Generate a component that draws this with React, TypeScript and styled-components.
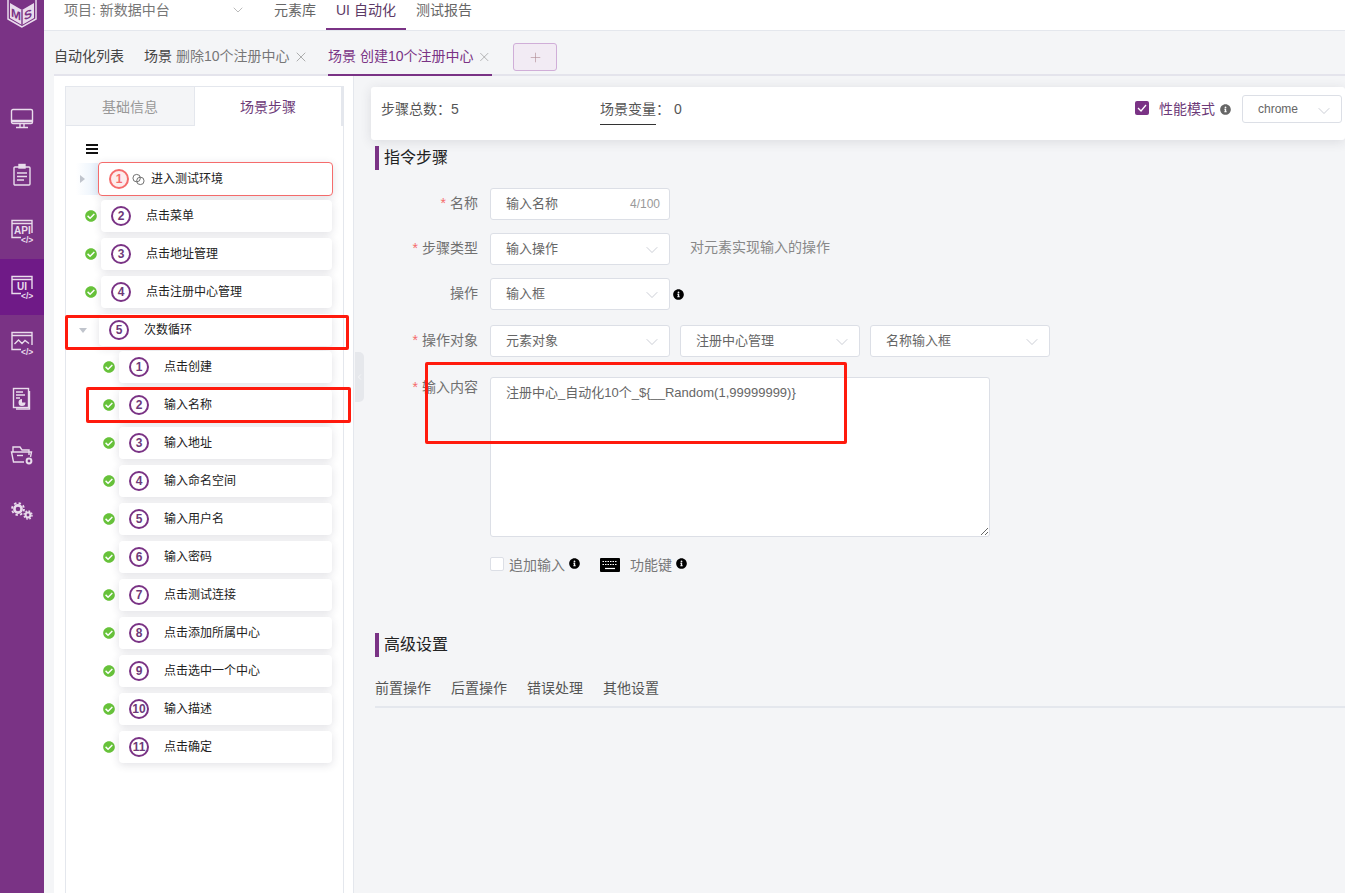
import styled, { createGlobalStyle } from 'styled-components';
import { ChevronDown, ChevronLeft, Plus, X } from 'lucide-react';
import { FaCheckCircle, FaInfoCircle } from 'react-icons/fa';

const PURPLE = '#7a3385';
const FONT = '"Liberation Sans", "Noto Sans CJK SC", sans-serif';

const GlobalStyle = createGlobalStyle`
  html, body {
    margin: 0;
    height: 100%;
    overflow: hidden;
    background: #f4f5f7;
    font-family: ${FONT};
  }
  * { box-sizing: border-box; }
`;

const Page = styled.div`
  position: relative;
  display: flex;
  width: 1345px;
  height: 893px;
  overflow: hidden;
`;

const Sidebar = styled.nav`
  flex: 0 0 44px;
  background: ${PURPLE};
  display: flex;
  flex-direction: column;
`;

const LogoBox = styled.div`
  height: 91px;
  display: flex;
  justify-content: center;
  align-items: flex-start;
  overflow: hidden;
`;

const NavItem = styled.div<{ $active?: boolean }>`
  height: 56px;
  display: flex;
  align-items: center;
  justify-content: center;
  background: ${(p) => (p.$active ? '#6f1a87' : 'transparent')};
`;

const Main = styled.div`
  flex: 1;
  min-width: 0;
  display: flex;
  flex-direction: column;
`;

const Header = styled.header`
  height: 31px;
  background: #fff;
  border-bottom: 1px solid #e4e7ed;
  display: flex;
  align-items: flex-start;
  padding-left: 20px;
  font-size: 14px;
  color: #666;
`;

const Project = styled.div`
  width: 200px;
  height: 20px;
  line-height: 20px;
  display: flex;
  justify-content: space-between;
  padding-right: 18px;
  align-items: center;
  color: #777;
`;

const HeaderNav = styled.div<{ $active?: boolean }>`
  height: 30px;
  line-height: 20px;
  padding: 0 10px;
  color: ${(p) => (p.$active ? '#5c3a66' : '#666')};
  border-bottom: 2px solid ${(p) => (p.$active ? PURPLE : 'transparent')};
`;

const TabBar = styled.div`
  height: 45px;
  margin-left: 10px;
  border-bottom: 2px solid #e4e4ec;
  display: flex;
  align-items: flex-end;
  font-size: 14px;
`;

const PageTab = styled.div<{ $active?: boolean; $width: number }>`
  width: ${(p) => p.$width}px;
  height: 45px;
  margin-bottom: -2px;
  padding-top: 16px;
  line-height: 18px;
  display: flex;
  gap: 4px;
  white-space: nowrap;
  color: ${(p) => (p.$active ? PURPLE : '#444')};
  border-bottom: 2px solid ${(p) => (p.$active ? PURPLE : 'transparent')};
  svg { margin-top: 2px; color: #888; }
`;

const TabMuted = styled.span<{ $active?: boolean }>`
  color: ${(p) => (p.$active ? PURPLE : '#777')};
`;

const AddTab = styled.button`
  width: 44px;
  height: 28px;
  margin: 0 0 3px 21px;
  padding: 0;
  display: flex;
  align-items: center;
  justify-content: center;
  background: #f2ebf4;
  border: 1px solid #d0aed8;
  border-radius: 3px;
  color: #b08a94;
`;

const Body = styled.div`
  flex: 1;
  min-height: 0;
  display: flex;
`;

const LeftPanel = styled.aside`
  flex: 0 0 300px;
  margin-left: 10px;
  padding: 10px 9px 0 11px;
  background: #fff;
  border-right: 1px solid #e4e7ed;
`;

const StepsBox = styled.div`
  height: 100%;
  border: 1px solid #e4e7ed;
  border-bottom: 0;
`;

const BoxTabs = styled.div`
  display: flex;
  height: 39px;
`;

const BoxTab = styled.div<{ $active?: boolean }>`
  flex: ${(p) => (p.$active ? '1' : '0 0 129px')};
  line-height: 40px;
  text-align: center;
  font-size: 14px;
  background: ${(p) => (p.$active ? '#fff' : '#f4f5f7')};
  color: ${(p) => (p.$active ? '#6d3a78' : '#999')};
  border-bottom: ${(p) => (p.$active ? '0' : '1px solid #e4e7ed')};
  border-right: ${(p) => (p.$active ? '2px solid #e4e7ed' : '1px solid #e4e7ed')};
`;

const Tree = styled.div`
  padding: 18px 11px 0 10px;
`;

const Burger = styled.div`
  width: 12px;
  height: 10px;
  margin: 0 0 8px 10px;
  border-top: 2px solid #111;
  border-bottom: 2px solid #111;
  position: relative;
  &::after {
    content: '';
    position: absolute;
    left: 0;
    right: 0;
    top: 2px;
    height: 2px;
    background: #111;
  }
`;

const Row = styled.div<{ $mb?: number }>`
  display: flex;
  align-items: center;
  margin-bottom: ${(p) => p.$mb ?? 6}px;
`;

const Gutter = styled.div<{ $width: number; $pad: number; $tint?: boolean }>`
  flex: 0 0 ${(p) => p.$width}px;
  height: 32px;
  display: flex;
  align-items: center;
  padding-left: ${(p) => p.$pad}px;
  background: ${(p) => (p.$tint ? 'linear-gradient(90deg, #fff, #e8f1fb)' : 'transparent')};
`;

const Caret = styled.div<{ $open?: boolean }>`
  width: 0;
  height: 0;
  ${(p) =>
    p.$open
      ? `border-left: 4px solid transparent; border-right: 4px solid transparent; border-top: 5px solid #c0c4cc;`
      : `border-top: 4px solid transparent; border-bottom: 4px solid transparent; border-left: 5px solid #c0c4cc;`}
`;

const StepCard = styled.div<{ $error?: boolean }>`
  flex: ${(p) => (p.$error ? '0 0 235px' : '1')};
  height: ${(p) => (p.$error ? '34px' : '32px')};
  margin-right: ${(p) => (p.$error ? '-1px' : '0')};
  display: flex;
  align-items: center;
  padding-left: 10px;
  background: #fff;
  border-radius: 4px;
  font-size: 12px;
  color: #222;
  border: ${(p) => (p.$error ? '1px solid #f56c6c' : '0')};
  box-shadow: 0 2px 8px rgba(40, 40, 70, 0.14);
`;

const StepNum = styled.div<{ $error?: boolean }>`
  width: 20px;
  height: 20px;
  flex: none;
  border-radius: 50%;
  display: flex;
  align-items: center;
  justify-content: center;
  font-size: 12px;
  font-weight: 700;
  background: ${(p) => (p.$error ? '#fdecec' : '#fff')};
  color: ${(p) => (p.$error ? '#f56c6c' : '#6d3a78')};
  border: 2px solid ${(p) => (p.$error ? '#f56c6c' : PURPLE)};
  margin-right: ${(p) => (p.$error ? '3px' : '15px')};
`;

const StepName = styled.span`
  margin-top: -3px;
`;

const LoopIcon = styled.svg`
  width: 13px;
  height: 13px;
  margin-right: 6px;
  flex: none;
`;

const Collapse = styled.div`
  position: absolute;
  left: 355px;
  top: 352px;
  width: 9px;
  height: 50px;
  background: #e6e8ec;
  border-radius: 0 5px 5px 0;
  display: flex;
  align-items: center;
  justify-content: center;
  color: #fff;
`;

const Content = styled.div`
  flex: 1;
  min-width: 0;
  padding: 11px 0 0 17px;
`;

const Summary = styled.div`
  height: 53px;
  background: #fff;
  border-radius: 3px;
  padding: 0 3px 0 10px;
  display: flex;
  align-items: flex-start;
  font-size: 14px;
  color: #555;
  box-shadow: 0 2px 12px rgba(40, 40, 60, 0.12);
`;

const SummaryItem = styled.div`
  width: 219px;
  line-height: 18px;
  margin-top: 13px;
`;

const VarLabel = styled.span`
  display: inline-block;
  height: 25px;
  border-bottom: 1px solid #333;
`;

const Spacer = styled.div`
  flex: 1;
`;

const Tick = styled.div`
  width: 14px;
  height: 14px;
  margin: 14px 10px 0 0;
  border-radius: 2px;
  background: ${PURPLE};
  display: flex;
  align-items: center;
  justify-content: center;
`;

const PerfLabel = styled.div`
  margin-top: 13px;
  line-height: 18px;
  color: #6d3a78;
  display: flex;
  align-items: center;
  gap: 5px;
  margin-right: 11px;
  svg { color: #666; }
`;

const Heading = styled.h3<{ $mt: number }>`
  margin: ${(p) => p.$mt}px 0 0 4px;
  height: 24px;
  line-height: 23px;
  padding-left: 5px;
  border-left: 4px solid ${PURPLE};
  font-size: 16px;
  font-weight: 400;
  color: #222;
`;

const Form = styled.div`
  margin: 18px 0 0 4px;
`;

const FormRow = styled.div<{ $mb: number }>`
  display: flex;
  align-items: flex-start;
  gap: 10px;
  margin-bottom: ${(p) => p.$mb}px;
`;

const Label = styled.div`
  flex: 0 0 103px;
  margin-right: 2px;
  line-height: 31px;
  text-align: right;
  font-size: 14px;
  color: #707070;
`;

const AreaLabel = styled(Label)`
  line-height: 20px;
`;

const Star = styled.span`
  color: #f56c6c;
  margin-right: 4px;
`;

const Field = styled.div<{ $width?: number }>`
  flex: 0 0 ${(p) => p.$width ?? 180}px;
  height: 32px;
  display: flex;
  align-items: center;
  justify-content: space-between;
  padding: 0 7px 3px 15px;
  background: #fff;
  border: 1px solid #dcdfe6;
  border-radius: 3px;
  font-size: 13px;
  color: #666;
  svg { color: #c0c4cc; margin-top: 5px; }
`;

const BrowserField = styled(Field)`
  margin-top: 8px;
  height: 28px;
  padding-bottom: 0;
  font-size: 12px;
  svg { margin-top: 3px; }
`;

const Counter = styled.span`
  font-size: 12px;
  color: #999;
  margin: 3px 2px 0 0;
`;

const Hint = styled.div`
  margin-left: 10px;
  line-height: 29px;
  font-size: 14px;
  color: #888;
`;

const InfoWrap = styled.div`
  height: 32px;
  margin-left: -7px;
  display: flex;
  align-items: center;
  color: #000;
`;

const ContentBox = styled.textarea`
  flex: 0 0 500px;
  height: 160px;
  padding: 6px 15px;
  resize: vertical;
  border: 1px solid #dcdfe6;
  border-radius: 3px;
  outline: 0;
  background: #fff;
  font-family: ${FONT};
  font-size: 13px;
  line-height: 18px;
  color: #666;
`;

const Options = styled.div`
  margin-left: 115px;
  height: 16px;
  display: flex;
  align-items: center;
  font-size: 14px;
  color: #777;
`;

const Box = styled.div`
  width: 14px;
  height: 14px;
  margin-right: 5px;
  background: #fff;
  border: 1px solid #dcdfe6;
  border-radius: 2px;
`;

const Option = styled.div<{ $width: number }>`
  flex: 0 0 ${(p) => p.$width}px;
  display: flex;
  align-items: center;
  gap: 4px;
  svg { color: #000; margin-bottom: 2px; }
`;

const KeyIcon = styled.svg`
  width: 20px;
  height: 14px;
  margin: 2px 10px 0 0;
`;

const AdvTabs = styled.div`
  margin: 20px 0 0 4px;
  height: 31px;
  display: flex;
  gap: 20px;
  border-bottom: 2px solid #e4e7ed;
  font-size: 14px;
  line-height: 22px;
  color: #555;
`;

const RedBox = styled.div<{ $x: number; $y: number; $w: number; $h: number }>`
  position: absolute;
  left: ${(p) => p.$x}px;
  top: ${(p) => p.$y}px;
  width: ${(p) => p.$w}px;
  height: ${(p) => p.$h}px;
  border: 3px solid #ff1a0d;
  border-radius: 2px;
  pointer-events: none;
`;

const ICON = { fill: 'none', stroke: '#e9dcec', strokeWidth: 1.4 };
const codeMark = (x: number, y: number) => (
  <text x={x} y={y} fontSize="8.5" fontWeight="700" fill="#e9dcec" stroke="none" fontFamily="Liberation Sans">
    {'</>'}
  </text>
);

const navIcons = [
  <svg width="24" height="22" viewBox="0 0 24 22" {...ICON}>
    <rect x="1.5" y="1.5" width="21" height="14" rx="1.5" />
    <path d="M1.5 13h21" strokeWidth="2.5" />
    <path d="M10 16v3M14 16v3M6 19.5h12" />
  </svg>,
  <svg width="20" height="24" viewBox="0 0 20 24" {...ICON}>
    <rect x="2" y="4" width="16" height="18" rx="1" />
    <rect x="7" y="1.5" width="6" height="3.5" fill="#e9dcec" />
    <path d="M5 10h10M5 13.5h10M5 17h7" />
  </svg>,
  <svg width="24" height="25" viewBox="0 0 24 25" {...ICON}>
    <path d="M11 18.5H2V1.5h20V14M2 4.5h20" />
    <text x="4" y="14.5" fontSize="10" fontWeight="700" fill="#e9dcec" stroke="none" fontFamily="Liberation Sans">API</text>
    {codeMark(11, 24)}
  </svg>,
  <svg width="24" height="25" viewBox="0 0 24 25" {...ICON}>
    <path d="M11 18.5H2V1.5h20V14M2 4.5h20" />
    <text x="7" y="14.5" fontSize="10" fontWeight="700" fill="#e9dcec" stroke="none" fontFamily="Liberation Sans">UI</text>
    {codeMark(11, 24)}
  </svg>,
  <svg width="24" height="25" viewBox="0 0 24 25" {...ICON}>
    <path d="M11 18.5H2V1.5h20V14M2 4.5h20" />
    <path d="M4.5 13l4-4 3.5 3.5 3-3 4 3" />
    {codeMark(11, 24)}
  </svg>,
  <svg width="20" height="24" viewBox="0 0 20 24" {...ICON}>
    <rect x="1.5" y="1.5" width="15" height="19" />
    <path d="M17.5 4v18H4" />
    <path d="M4 5h7M4 8h9M4 11h4" />
    <path d="M10 12a3.5 3.5 0 1 0 3.5 3.5H10z" fill="#e9dcec" stroke="none" />
  </svg>,
  <svg width="24" height="22" viewBox="0 0 24 22" {...ICON}>
    <path d="M3 8V3h7l2 3h7v5" />
    <path d="M14 18H3.5L1.5 8h20l-1 5" />
    <path d="M7 11.5h6" />
    <circle cx="19" cy="17" r="2.4" strokeWidth="2" />
  </svg>,
  <svg width="24" height="20" viewBox="0 0 24 20" fill="none" stroke="#e9dcec">
    <circle cx="8" cy="8" r="3.6" strokeWidth="2.6" />
    <circle cx="8" cy="8" r="6" strokeWidth="1.8" strokeDasharray="2.4 2.3" />
    <circle cx="18" cy="14" r="2.4" strokeWidth="2" />
    <circle cx="18" cy="14" r="4" strokeWidth="1.4" strokeDasharray="1.7 1.45" />
  </svg>,
];

const topSteps = [
  { n: 2, name: '点击菜单' },
  { n: 3, name: '点击地址管理' },
  { n: 4, name: '点击注册中心管理' },
];

const childSteps = [
  '点击创建',
  '输入名称',
  '输入地址',
  '输入命名空间',
  '输入用户名',
  '输入密码',
  '点击测试连接',
  '点击添加所属中心',
  '点击选中一个中心',
  '输入描述',
  '点击确定',
];

function Select({ value, width }: { value: string; width?: number }) {
  return (
    <Field $width={width}>
      {value}
      <ChevronDown size={20} strokeWidth={1} />
    </Field>
  );
}

export default function App() {
  return (
    <Page>
      <GlobalStyle />
      <Sidebar>
        <LogoBox>
          <svg width="32" height="28" viewBox="0 0 32 28">
            <path d="M16 27L2 19V-1L16 -9L30 -1V19Z" fill="none" stroke="#e9dcec" strokeWidth="1.5" />
            <path d="M4 3L16 10L28 3V18L16 25L4 18Z" fill="#e9dcec" />
            <path d="M16 10V25" stroke={PURPLE} strokeWidth="1.4" />
            <text x="5" y="19" fontSize="12" fontWeight="700" fill={PURPLE} fontFamily="Liberation Sans" transform="skewY(25) translate(0 -5)">M</text>
            <text x="18" y="20" fontSize="12" fontWeight="700" fill={PURPLE} fontFamily="Liberation Sans" transform="skewY(-25) translate(0 9)">S</text>
          </svg>
        </LogoBox>
        {navIcons.map((icon, i) => (
          <NavItem key={i} $active={i === 3}>
            {icon}
          </NavItem>
        ))}
      </Sidebar>

      <Main>
        <Header>
          <Project>
            项目: 新数据中台
            <ChevronDown size={16} strokeWidth={1} color="#999" />
          </Project>
          <HeaderNav>元素库</HeaderNav>
          <HeaderNav $active>UI 自动化</HeaderNav>
          <HeaderNav>测试报告</HeaderNav>
        </Header>

        <TabBar>
          <PageTab $width={90}>自动化列表</PageTab>
          <PageTab $width={184}>
            <span>
              场景 <TabMuted>删除10个注册中心</TabMuted>
            </span>
            <X size={16} strokeWidth={1} />
          </PageTab>
          <PageTab $active $width={164}>
            <span>
              场景 <TabMuted $active>创建10个注册中心</TabMuted>
            </span>
            <X size={16} strokeWidth={1} />
          </PageTab>
          <AddTab aria-label="add">
            <Plus size={15} strokeWidth={1} />
          </AddTab>
        </TabBar>

        <Body>
          <LeftPanel>
            <StepsBox>
              <BoxTabs>
                <BoxTab>基础信息</BoxTab>
                <BoxTab $active>场景步骤</BoxTab>
              </BoxTabs>
              <Tree>
                <Burger />
                <Row $mb={4}>
                  <Gutter $width={22} $pad={4} $tint>
                    <Caret />
                  </Gutter>
                  <StepCard $error>
                    <StepNum $error>1</StepNum>
                    <LoopIcon viewBox="0 0 14 14" fill="none" stroke="#666" strokeWidth="1">
                      <circle cx="5" cy="5.5" r="4" />
                      <circle cx="9" cy="8.5" r="4" />
                    </LoopIcon>
                    <StepName>进入测试环境</StepName>
                  </StepCard>
                </Row>
                {topSteps.map((s) => (
                  <Row key={s.n}>
                    <Gutter $width={25} $pad={9}>
                      <FaCheckCircle size={12} color="#67c23a" />
                    </Gutter>
                    <StepCard>
                      <StepNum>{s.n}</StepNum>
                      <StepName>{s.name}</StepName>
                    </StepCard>
                  </Row>
                ))}
                <Row $mb={5}>
                  <Gutter $width={23} $pad={3}>
                    <Caret $open />
                  </Gutter>
                  <StepCard>
                    <StepNum>5</StepNum>
                    <StepName>次数循环</StepName>
                  </StepCard>
                </Row>
                {childSteps.map((name, i) => (
                  <Row key={name}>
                    <Gutter $width={43} $pad={27}>
                      <FaCheckCircle size={12} color="#67c23a" />
                    </Gutter>
                    <StepCard>
                      <StepNum>{i + 1}</StepNum>
                      <StepName>{name}</StepName>
                    </StepCard>
                  </Row>
                ))}
              </Tree>
            </StepsBox>
          </LeftPanel>

          <Content>
            <Summary>
              <SummaryItem>步骤总数：5</SummaryItem>
              <SummaryItem>
                <VarLabel>场景变量</VarLabel>： 0
              </SummaryItem>
              <Spacer />
              <Tick>
                <svg width="10" height="8" viewBox="0 0 10 8" fill="none" stroke="#fff" strokeWidth="1.3">
                  <path d="M1 4l3 3 5-6" />
                </svg>
              </Tick>
              <PerfLabel>
                性能模式
                <FaInfoCircle size={11} />
              </PerfLabel>
              <BrowserField $width={100}>
                chrome
                <ChevronDown size={20} strokeWidth={1} />
              </BrowserField>
            </Summary>

            <Heading $mt={6}>指令步骤</Heading>
            <Form>
              <FormRow $mb={13}>
                <Label>
                  <Star>*</Star>名称
                </Label>
                <Field>
                  输入名称
                  <Counter>4/100</Counter>
                </Field>
              </FormRow>
              <FormRow $mb={13}>
                <Label>
                  <Star>*</Star>步骤类型
                </Label>
                <Select value="输入操作" />
                <Hint>对元素实现输入的操作</Hint>
              </FormRow>
              <FormRow $mb={15}>
                <Label>操作</Label>
                <Select value="输入框" />
                <InfoWrap>
                  <FaInfoCircle size={11} />
                </InfoWrap>
              </FormRow>
              <FormRow $mb={20}>
                <Label>
                  <Star>*</Star>操作对象
                </Label>
                <Select value="元素对象" />
                <Select value="注册中心管理" />
                <Select value="名称输入框" />
              </FormRow>
              <FormRow $mb={19}>
                <AreaLabel>
                  <Star>*</Star>输入内容
                </AreaLabel>
                <ContentBox readOnly defaultValue={'注册中心_自动化10个_${__Random(1,99999999)}'} />
              </FormRow>
              <Options>
                <Box />
                <Option $width={91}>
                  追加输入
                  <FaInfoCircle size={11} />
                </Option>
                <KeyIcon viewBox="0 0 20 14">
                  <rect width="20" height="14" rx="1" fill="#000" />
                  <path d="M2.5 3.5h15M2.5 6.5h15" stroke="#fff" strokeWidth="1.2" strokeDasharray="1.5 1" />
                  <path d="M5 10.5h10" stroke="#fff" strokeWidth="1.2" />
                </KeyIcon>
                <Option $width={70}>
                  功能键
                  <FaInfoCircle size={11} />
                </Option>
              </Options>
            </Form>

            <Heading $mt={61}>高级设置</Heading>
            <AdvTabs>
              <span>前置操作</span>
              <span>后置操作</span>
              <span>错误处理</span>
              <span>其他设置</span>
            </AdvTabs>
          </Content>
        </Body>
      </Main>

      <Collapse>
        <ChevronLeft size={10} strokeWidth={1.5} />
      </Collapse>
      <RedBox $x={65} $y={315} $w={284} $h={35} />
      <RedBox $x={86} $y={387} $w={265} $h={36} />
      <RedBox $x={425} $y={362} $w={422} $h={82} />
    </Page>
  );
}
